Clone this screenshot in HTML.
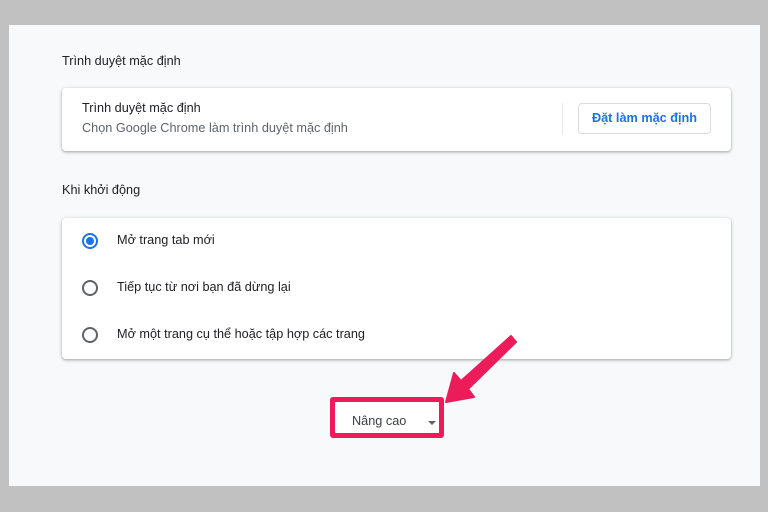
<!DOCTYPE html>
<html><head><meta charset="utf-8"><style>
body{margin:0;width:768px;height:512px;background:#c1c1c1;font-family:"Liberation Sans",Arial,sans-serif;position:relative;overflow:hidden}
.panel{position:absolute;left:9px;top:25px;width:751px;height:461px;background:#f8f9fa}
.t{position:absolute;font-size:12.7px;color:#202124}
.card{position:absolute;left:62px;width:669px;background:#fff;border-radius:4px;box-shadow:0 1px 2px rgba(60,64,67,.3),0 1px 3px 1px rgba(60,64,67,.15)}
.radio{position:absolute;left:82px;width:12px;height:12px;border:2px solid #5f6368;border-radius:50%}
.radio.on{border-color:#1a73e8}
.radio.on::after{content:"";position:absolute;left:2px;top:2px;width:8px;height:8px;border-radius:50%;background:#1a73e8}
</style></head><body>
<div class="panel"></div>
<div class="t" style="left:62px;top:54px">Trình duyệt mặc định</div>
<div class="card" style="top:88px;height:63px"></div>
<div class="t" style="left:82px;top:101px">Trình duyệt mặc định</div>
<div class="t" style="left:82px;top:121px;color:#5f6368">Chọn Google Chrome làm trình duyệt mặc định</div>
<div style="position:absolute;left:562px;top:103px;width:1px;height:32px;background:#e8e8e8"></div>
<div style="position:absolute;left:578px;top:103px;width:133px;height:31px;border:1px solid #dadce0;border-radius:4px;box-sizing:border-box;color:#1a73e8;font-size:12.7px;font-weight:bold;text-align:center;line-height:29px">Đặt làm mặc định</div>
<div class="t" style="left:62px;top:183px">Khi khởi động</div>
<div class="card" style="top:218px;height:141px"></div>
<div class="radio on" style="top:233px"></div>
<div class="radio" style="top:280px"></div>
<div class="radio" style="top:327px"></div>
<div class="t" style="left:117px;top:233px">Mở trang tab mới</div>
<div class="t" style="left:117px;top:280px">Tiếp tục từ nơi bạn đã dừng lại</div>
<div class="t" style="left:117px;top:327px">Mở một trang cụ thể hoặc tập hợp các trang</div>
<div style="position:absolute;left:330px;top:397px;width:114px;height:41px;border:5px solid #ec1c5b;border-radius:3px;box-sizing:border-box;background:#fff"></div>
<div class="t" style="left:352px;top:414px;color:#3c4043">Nâng cao</div>
<div style="position:absolute;left:428px;top:421px;border-left:4px solid transparent;border-right:4px solid transparent;border-top:4px solid #5f6368"></div>
<svg style="position:absolute;left:0;top:0" width="768" height="512"><path d="M511 336 L516 342 L468 389 L474 397 L446 402 L454 373 L461 381 Z" fill="#ec1c5b" stroke="#ec1c5b" stroke-width="2" stroke-linejoin="round"/></svg>
</body></html>
